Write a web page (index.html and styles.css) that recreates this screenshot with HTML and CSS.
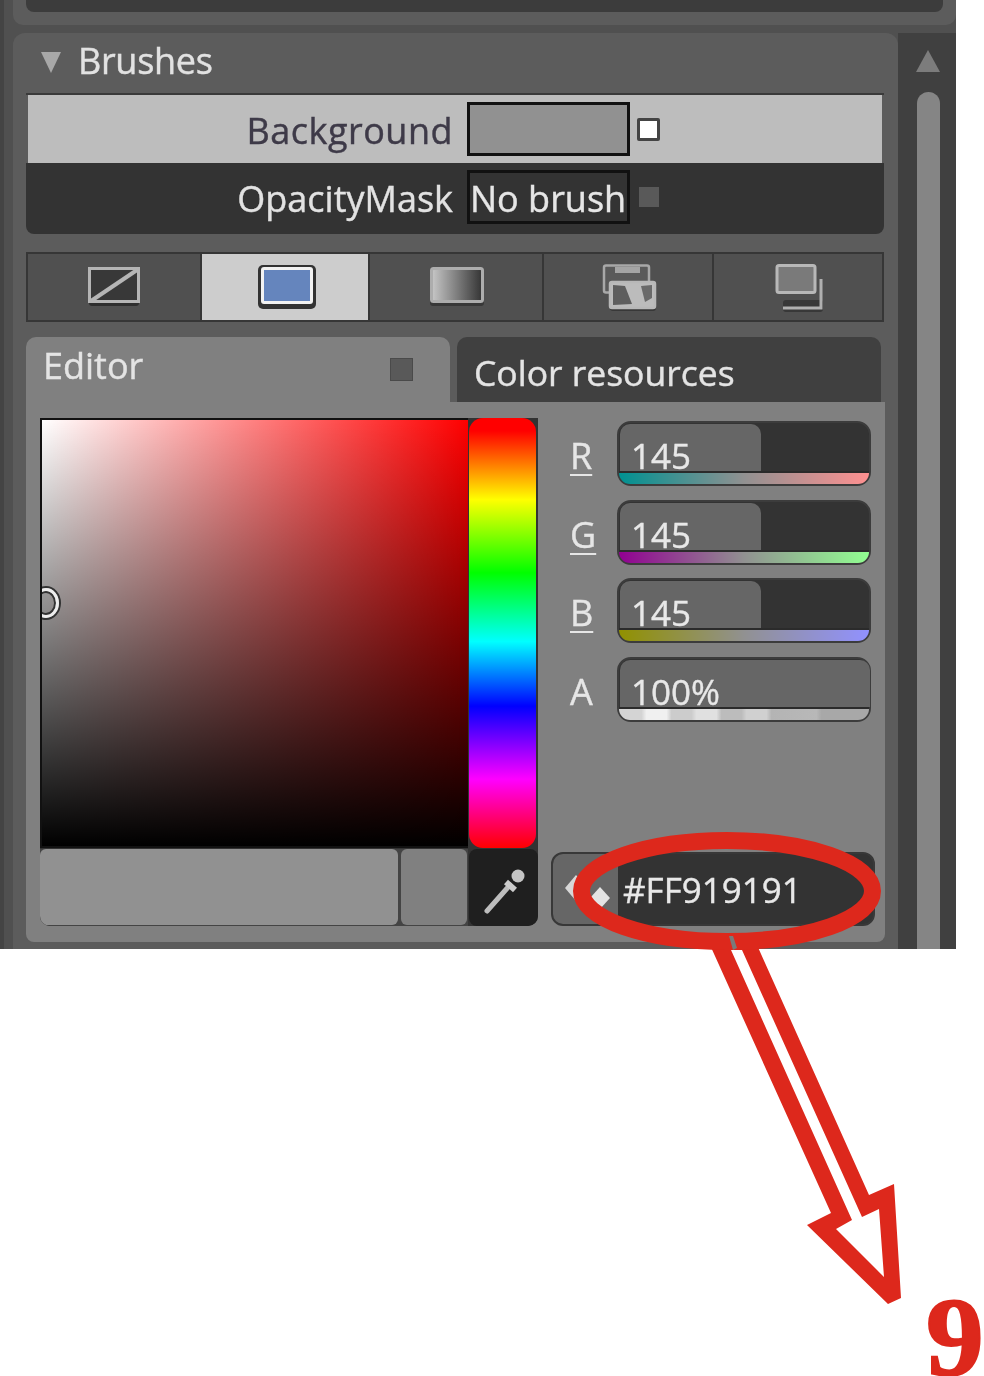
FILE: index.html
```html
<!DOCTYPE html>
<html lang="en">
<head>
<meta charset="utf-8">
<title>Brushes</title>
<link rel="stylesheet" href="styles.css">
</head>
<body>
<div class="stage">
  <div class="app">
    <div class="top"><div class="top-inner"></div></div>
    <div class="main">
      <section class="brushes">
        <header class="head">
          <span class="caret"></span>
          <h2 class="title">Brushes</h2>
        </header>
        <div class="props">
          <div class="prop prop-on">
            <span class="prop-name">Background</span>
            <span class="prop-value swatch"></span>
            <span class="marker marker-on"></span>
          </div>
          <div class="prop prop-off">
            <span class="prop-name">OpacityMask</span>
            <span class="prop-value nobrush">No brush</span>
            <span class="marker marker-off"></span>
          </div>
        </div>
        <div class="kinds">
          <div class="kind">
            <svg class="ico" width="60" height="50" viewBox="0 0 60 50"><rect x="5" y="8" width="50" height="36" rx="3" fill="#2e2e2e"/><rect x="5.500" y="6.500" width="49" height="33" fill="#383838" stroke="#b5b5b5" stroke-width="3"/><path d="M7 39 L53 8" stroke="#b5b5b5" stroke-width="4"/></svg>
          </div>
          <div class="kind kind-on">
            <svg class="ico" width="60" height="50" viewBox="0 0 60 50"><rect x="1" y="3" width="58" height="44" rx="5" fill="#333"/><rect x="4" y="5" width="52" height="37" rx="3" fill="#f2f2f2"/><rect x="7" y="8" width="46" height="31" fill="#6585bd"/></svg>
          </div>
          <div class="kind">
            <svg class="ico" width="60" height="50" viewBox="0 0 60 50"><defs><linearGradient id="g1"><stop offset="0" stop-color="#c8c8c8"/><stop offset="1" stop-color="#333"/></linearGradient></defs><rect x="4" y="8" width="54" height="36" rx="3" fill="#383838"/><rect x="5.500" y="6.500" width="51" height="33" rx="2" fill="url(#g1)" stroke="#adadad" stroke-width="3"/></svg>
          </div>
          <div class="kind">
            <svg class="ico" width="60" height="50" viewBox="0 0 60 50"><rect x="12" y="36" width="46" height="13" rx="3" fill="#383838"/><rect x="6" y="3.500" width="45" height="27" rx="2" fill="#5a5a5a" stroke="#a8a8a8" stroke-width="2.500"/><path d="M17 5 H42 V11 H17 Z" fill="#a4a4a4"/><rect x="12" y="20" width="45" height="26" rx="2" fill="#bcbcbc" stroke="#b8b8b8" stroke-width="2.500"/><path d="M15 23 L27 24 L34 42 L15 43 Z" fill="#5e5e5e"/><path d="M43 24 L54 23 L54 36 L47 40 Z" fill="#6a6a6a"/></svg>
          </div>
          <div class="kind">
            <svg class="ico" width="60" height="50" viewBox="0 0 60 50"><rect x="15" y="38" width="40" height="12" rx="3" fill="#383838"/><path d="M15 46 H53 V17" fill="none" stroke="#b0b0b0" stroke-width="3"/><rect x="9" y="3.500" width="38" height="27" rx="2" fill="#7a7a7a" stroke="#b8b8b8" stroke-width="3"/></svg>
          </div>
        </div>
        <div class="tabs">
          <div class="tab tab-on">
            <span class="tab-text">Editor</span>
            <span class="pin"></span>
          </div>
          <div class="tab tab-off">
            <span class="tab-text">Color resources</span>
          </div>
        </div>
        <div class="editor">
          <div class="picker">
            <div class="sv"><span class="ring"></span></div>
            <div class="hue"></div>
            <div class="previews">
              <span class="pv pv-new"></span>
              <span class="pv pv-old"></span>
            </div>
            <div class="drop">
              <svg width="44" height="54" viewBox="0 0 44 54"><path d="M5 50 L28 24" stroke="#bdbdbd" stroke-width="5" stroke-linecap="round"/><path d="M24 21 L33 29" stroke="#ccc" stroke-width="6"/><circle cx="36" cy="15" r="6.500" fill="#c4c4c4"/></svg>
            </div>
          </div>
          <div class="values">
            <div class="channels">
              <div class="channel">
                <span class="ch-name ch-key">R</span>
                <div class="slider">
                  <div class="track"><span class="fill"></span><span class="num">145</span></div>
                  <div class="strip strip-r"></div>
                </div>
              </div>
              <div class="channel">
                <span class="ch-name ch-key">G</span>
                <div class="slider">
                  <div class="track"><span class="fill"></span><span class="num">145</span></div>
                  <div class="strip strip-g"></div>
                </div>
              </div>
              <div class="channel">
                <span class="ch-name ch-key">B</span>
                <div class="slider">
                  <div class="track"><span class="fill"></span><span class="num">145</span></div>
                  <div class="strip strip-b"></div>
                </div>
              </div>
              <div class="channel">
                <span class="ch-name">A</span>
                <div class="slider">
                  <div class="track"><span class="fill fill-full"></span><span class="num">100%</span></div>
                  <div class="strip strip-a"></div>
                </div>
              </div>
            </div>
            <div class="hex">
              <div class="hex-btn">
                <svg width="60" height="56" viewBox="0 0 60 56"><path d="M20 14 L31 27 L20 40 L9 27 Z" fill="#d8d8d8"/><path d="M44 26 L54 37 L44 48 L34 37 Z" fill="#e4e4e4"/></svg>
              </div>
              <span class="hex-text">#FF919191</span>
            </div>
          </div>
        </div>
      </section>
      <aside class="scroll">
        <span class="scroll-up"></span>
        <span class="thumb"></span>
      </aside>
    </div>
  </div>
  <svg class="callout" width="984" height="1376" viewBox="0 0 984 1376">
    <path fill="#dd281c" fill-rule="evenodd" d="M710 945 L831 1213 L807 1225 L888 1304 L901 1298 L894 1184 L869 1195 L757 945 Z M731 950 L852 1220 L836 1229 L884 1277 L879 1209 L862 1217 L742 950 Z"/>
    <ellipse cx="727" cy="891" rx="145.500" ry="50.500" fill="none" stroke="#dd281c" stroke-width="17"/>
    <path fill="#7a7a7a" d="M729 936 L733 936 L737 948 L733 950 Z"/>
  </svg>
  <span class="nine">9</span>
</div>
</body>
</html>
```

FILE: styles.css
```css
* { box-sizing: border-box; margin: 0; padding: 0; }
html, body { background: #fff; }
body { width: 984px; height: 1376px; overflow: hidden; font-family: "Open Sans", "Noto Sans", sans-serif; }

.stage { position: relative; width: 984px; height: 1376px; overflow: hidden; }
.app { width: 959px; height: 952px; margin: -3px 0 0 -3px; overflow: hidden; background: #505050; padding: 3px 0 0 9px; border-left: 7px solid #444; filter: blur(0.6px); -webkit-text-stroke: 0.4px currentColor; }

.top { height: 25px; background: #5c5c5c; border-radius: 0 0 10px 10px; padding: 0 13px; margin-bottom: 8px; }
.top-inner { height: 12px; background: #3c3c3c; border-radius: 0 0 8px 8px; }

.main { display: flex; height: 916px; }
.brushes { width: 885px; background: #5c5c5c; border-radius: 12px 12px 0 0; padding: 0 13px; }
.head { height: 60px; display: flex; align-items: center; padding-left: 15px; gap: 17px; }
.caret { width: 0; height: 0; border-left: 10px solid transparent; border-right: 10px solid transparent; border-top: 21px solid #a8a8a8; margin-top: -2px; }
.title { font-size: 36px; font-weight: 400; color: #e2e2e2; line-height: 1; letter-spacing: -0.3px; margin-top: -5px; }

.props { border-top: 2px solid #3a3a3a; margin-right: 1px; }
.prop { display: flex; align-items: center; padding-left: 2px; }
.prop-on { height: 68px; background: #bdbdbd; margin: 0 2px; padding-left: 0; }
.prop-off { height: 71px; background: #333; border-radius: 0 0 8px 8px; padding-bottom: 3px; }
.prop-name { width: 425px; text-align: right; font-size: 36px; line-height: 1; flex: none; margin-top: 4px; }
.prop-off .prop-name { color: #e2e2e2; }
.prop-on .prop-name { color: #3e3a48; letter-spacing: 0.5px; }
.prop-value { width: 163px; height: 54px; margin-left: 14px; border: 3px solid #111; flex: none; }
.swatch { background: #919191; }
.nobrush { color: #e6e6e6; font-size: 36px; line-height: 52px; white-space: nowrap; background: #333; }
.marker { width: 23px; height: 23px; margin-left: 7px; }
.marker-on { background: #fff; border: 3px solid #444; border-radius: 2px; }
.marker-off { background: #595959; width: 20px; height: 20px; margin-left: 9px; }

.kinds { display: grid; grid-template-columns: 174px 168px 174px 170px 1fr; height: 70px; margin: 18px 1px 0 0; border: 2px solid #363636; background: #505050; }
.kind { display: flex; align-items: center; justify-content: center; border-right: 2px solid #363636; }
.kind:last-child { border-right: 0; }
.kind-on { background: #cdcdcd; padding-left: 4px; }
.ico { display: block; flex: none; }

.tabs { display: flex; gap: 7px; margin-top: 15px; height: 65px; }
.tab { width: 424px; display: flex; align-items: center; justify-content: space-between; border-radius: 10px 10px 0 0; }
.tab-on { background: #808080; padding: 0 37px 0 17px; }
.tab-off { background: #404040; padding: 6px 0 0 17px; }
.tab-text { font-size: 36px; line-height: 1; color: #e4e4e4; margin-top: -7px; }
.tab-off .tab-text { margin-top: 0; font-size: 35.500px; }
.pin { width: 23px; height: 23px; background: #595959; border: 1px solid #4a4a4a; }

.editor { height: 540px; width: 859px; background: #808080; border-radius: 0 0 8px 8px; padding: 16px 9px 0 14px; display: flex; gap: 13px; }
.picker { display: grid; grid-template-columns: 428px 69px; grid-template-rows: 430px 77px; gap: 1px; background: #333; border-radius: 0 0 10px 10px; width: 498px; height: 508px; overflow: hidden; }
.sv { position: relative; overflow: hidden; border: 2px solid #111; border-right: 0; background: linear-gradient(to top, #000, rgba(0,0,0,0)), linear-gradient(to right, #fff, #f00); }
.ring { position: absolute; left: -9px; top: 168px; width: 26px; height: 30px; border: 3px solid #eee; border-radius: 50%; box-shadow: 0 0 0 2px #333, inset 0 0 0 2px #333; }
.hue { width: 67px; background: linear-gradient(to bottom, #f00 3%, #ff0 19%, #0f0 36%, #0ff 52%, #00f 67%, #f0f 84%, #f00 100%); border-radius: 14px; }
.previews { display: flex; gap: 3px; background: #444; }
.pv { display: block; height: 76px; border-radius: 6px; }
.pv-new { width: 358px; background: #919191; }
.pv-old { width: 66px; background: #808080; }
.drop { background: #1f1f1f; border-radius: 8px; display: flex; align-items: center; justify-content: center; }

.values { width: 324px; display: flex; flex-direction: column; justify-content: space-between; height: 508px; }
.channels { display: flex; flex-direction: column; gap: 13.670px; padding: 3px 0 0 19px; }
.channel { display: flex; align-items: center; gap: 21px; height: 65px; }
.ch-name { width: 26px; font-size: 36px; line-height: 1; color: #e6e6e6; flex: none; margin-top: 5px; }
.ch-key { text-decoration: underline; text-decoration-thickness: 2px; text-underline-offset: 5px; }
.slider { width: 254px; height: 65px; border: 2px solid #3c3c3c; border-radius: 14px; background: #333; display: flex; flex-direction: column; }
.track { position: relative; flex: 1; border-bottom: 2px solid #2b2b2b; }
.fill { position: absolute; left: 1px; top: 1px; bottom: 0; width: 141px; background: #666; border-radius: 10px 10px 0 0; }
.fill-full { width: 250px; }
.num { position: absolute; left: 12px; bottom: 3px; font-size: 35px; line-height: 24px; color: #e8e8e8; white-space: nowrap; }
.strip { height: 11px; flex: none; border-radius: 0 0 12px 12px; }
.strip-r { background: linear-gradient(to right, #009191, #919191 50%, #ff9191); }
.strip-g { background: linear-gradient(to right, #910091, #919191 50%, #91ff91); }
.strip-b { background: linear-gradient(to right, #919100, #919191 50%, #9191ff); }
.strip-a { background: linear-gradient(to right, #d4d4d4 9%, #f0f0f0 11%, #f0f0f0 19%, #ccc 21%, #ccc 29%, #e0e0e0 31%, #e0e0e0 39%, #bcbcbc 41%, #bcbcbc 49%, #d0d0d0 51%, #d0d0d0 59%, #b4b4b4 61%, #b8b8b8 79%, #a8a8a8 81%); }

.hex { display: flex; height: 74px; background: #333; border: 2px solid #383838; border-radius: 12px; }
.hex-btn { width: 65px; background: #666; border-radius: 10px 0 0 10px; display: flex; align-items: center; justify-content: center; flex: none; }
.hex-text { font-size: 35px; line-height: 72px; color: #e8e8e8; padding-left: 5px; }

.scroll { flex: 1; background: #404040; display: flex; flex-direction: column; align-items: center; padding: 17px 0 0 2px; }
.scroll-up { width: 0; height: 0; border-left: 12px solid transparent; border-right: 12px solid transparent; border-bottom: 22px solid #7c7c7c; }
.thumb { width: 23px; flex: 1; margin-top: 20px; background: #858585; border-radius: 12px 12px 0 0; }

.callout { position: absolute; left: 0; top: 0; pointer-events: none; }
.nine { position: absolute; left: 926px; top: 1298px; font-family: "Liberation Serif", serif; font-weight: 700; font-size: 112px; line-height: 78px; color: #dd281c; -webkit-text-stroke: 2px #dd281c; transform: scaleX(1.03); transform-origin: left center; }
```
